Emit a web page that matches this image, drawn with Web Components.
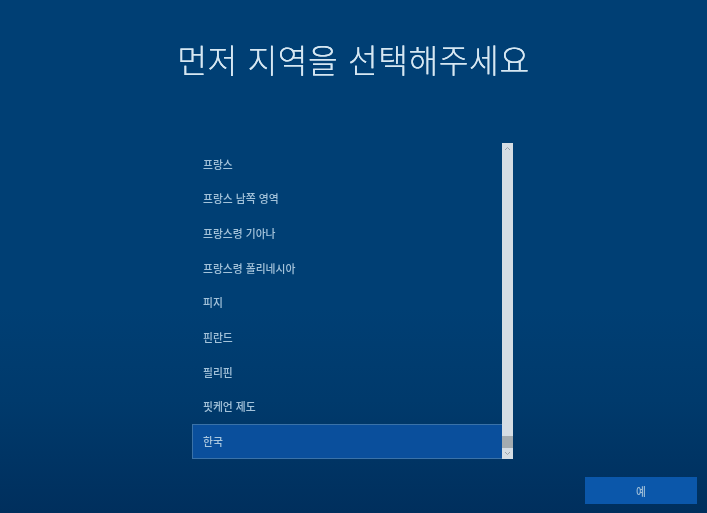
<!DOCTYPE html>
<html lang="ko"><head><meta charset="utf-8">
<style>
html,body{margin:0;height:100%;background:#013a70}
</style></head><body>
<oobe-page>
  <span slot="title">먼저 지역을 선택해주세요</span>
  <region-list>
    <region-item>프랑스</region-item>
    <region-item>프랑스 남쪽 영역</region-item>
    <region-item>프랑스령 기아나</region-item>
    <region-item>프랑스령 폴리네시아</region-item>
    <region-item>피지</region-item>
    <region-item>핀란드</region-item>
    <region-item>필리핀</region-item>
    <region-item>핏케언 제도</region-item>
    <region-item selected>한국</region-item>
  </region-list>
  <oobe-button slot="action">예</oobe-button>
</oobe-page>
<script>
class OobePage extends HTMLElement{constructor(){super();this.attachShadow({mode:'open'}).innerHTML=`<style>
:host{display:flex;flex-direction:column;width:707px;height:513px;box-sizing:border-box;overflow:hidden;
 background:linear-gradient(180deg,#003f74 0,#003f74 60%,#003a6c 78%,#002f5d 100%);
 font-family:"Noto Sans CJK KR","Noto Sans",sans-serif;color:#fff}
h1{margin:0;padding-top:36px;height:143px;box-sizing:border-box;text-align:center;font-weight:300;font-size:32.4px;line-height:46px;color:#d6e7f2;letter-spacing:.5px;filter:blur(.4px);text-shadow:0 0 .6px #d6e7f2}
.body{display:flex;padding-left:192px}
.foot{margin-top:auto;display:flex;justify-content:flex-end;padding:0 10px 9px 0}
</style><h1><slot name="title"></slot></h1><div class="body"><slot></slot></div><div class="foot"><slot name="action"></slot></div>`}}
class RegionList extends HTMLElement{constructor(){super();this.attachShadow({mode:'open'}).innerHTML=`<style>
:host{display:flex;width:321px;height:316px}
.items{width:310px;display:flex;flex-direction:column;justify-content:flex-end}
.bar{width:11px;height:316px;background:#d5dde4;display:flex;flex-direction:column;align-items:center;filter:blur(.6px)}
.arrow{height:11px;display:flex;align-items:center;justify-content:center;flex:none}
.track{flex:1;display:flex;flex-direction:column;justify-content:flex-end}
.thumb{width:11px;height:12px;background:#a3abb0}
</style><div class="items"><slot></slot></div><div class="bar">
<div class="arrow"><svg width="7" height="5" viewBox="0 0 7 5"><path d="M1 4 3.5 1.5 6 4" fill="none" stroke="#9aa3aa" stroke-width="1"/></svg></div>
<div class="track"><div class="thumb"></div></div>
<div class="arrow"><svg width="7" height="5" viewBox="0 0 7 5"><path d="M1 1 3.5 3.5 6 1" fill="none" stroke="#9aa3aa" stroke-width="1"/></svg></div>
</div>`}}
class RegionItem extends HTMLElement{constructor(){super();this.attachShadow({mode:'open'}).innerHTML=`<style>
:host{display:flex;align-items:center;box-sizing:border-box;height:34.7px;padding:0 0 1px 11px;font-size:10.8px;font-weight:500;color:#a4c3da;flex:none}
:host([selected]){background:#0a4f9c;border:1px solid #3a72a8;border-right:0;padding-left:10px;color:#a9c6de}
span{filter:blur(.6px)}
</style><span><slot></slot></span>`}}
class OobeButton extends HTMLElement{constructor(){super();this.attachShadow({mode:'open'}).innerHTML=`<style>
:host{display:flex;align-items:center;justify-content:center;box-sizing:border-box;width:112px;height:27px;background:#0b57aa;font-size:10.8px;font-weight:500;color:#9dbdd8}
span{filter:blur(.6px)}
</style><span><slot></slot></span>`}}
customElements.define('oobe-page',OobePage);
customElements.define('region-list',RegionList);
customElements.define('region-item',RegionItem);
customElements.define('oobe-button',OobeButton);
</script>
</body></html>
